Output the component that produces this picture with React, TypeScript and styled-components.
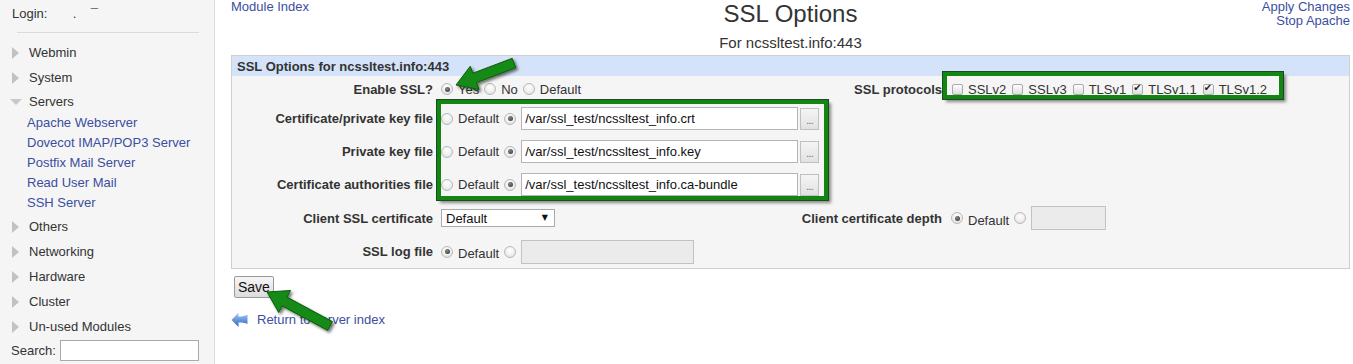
import React from "react";
import styled, { createGlobalStyle } from "styled-components";

const GlobalStyle = createGlobalStyle`
  html, body { margin: 0; padding: 0; background: #fff; }
  body { font-family: "Liberation Sans", Arial, sans-serif; font-size: 13px; color: #333; }
  * { box-sizing: border-box; }
`;

const LINK = "#3b4e9f";

const Page = styled.div`
  position: relative;
  display: flex;
  width: 1353px;
  height: 364px;
  overflow: hidden;
`;

/* ---------- Sidebar ---------- */
const Sidebar = styled.aside`
  width: 215px;
  flex: none;
  background: #f5f5f5;
  border-right: 1px solid #dcdcdc;
`;
const LoginRow = styled.div`
  height: 28px;
  line-height: 28px;
  padding-left: 12px;
  color: #333;
  white-space: pre;
`;
const Separator = styled.div`
  height: 1px;
  margin: 4px 15px 0 17px;
  background: #dadada;
`;
const Nav = styled.nav`
  padding-top: 7px;
`;
const Category = styled.div<{ $open?: boolean }>`
  height: ${(p) => (p.$open ? 23 : 25)}px;
  display: flex;
  align-items: center;
  padding-left: ${(p) => (p.$open ? 10 : 12)}px;
  color: #333;
`;
const TriRight = styled.span`
  width: 0;
  height: 0;
  border-top: 6px solid transparent;
  border-bottom: 6px solid transparent;
  border-left: 7px solid #c2c2c2;
  margin-right: 10px;
`;
const TriDown = styled.span`
  width: 0;
  height: 0;
  border-left: 6px solid transparent;
  border-right: 6px solid transparent;
  border-top: 6px solid #c8c8c8;
  margin-right: 7px;
  margin-top: 1px;
`;
const SubList = styled.div`
  margin-bottom: 1px;
`;
const SubLink = styled.a`
  display: block;
  height: 20px;
  line-height: 20px;
  padding-left: 27px;
  color: ${LINK};
  text-decoration: none;
`;
const SearchRow = styled.div`
  height: 22px;
  display: flex;
  align-items: center;
  padding-left: 11px;
  color: #333;
`;
const SearchInput = styled.input`
  margin-left: 4px;
  width: 139px;
  height: 21px;
  border: 1px solid #a9a9a9;
  background: #fff;
`;

/* ---------- Main ---------- */
const Main = styled.main`
  flex: 1;
  padding: 0 3px 0 16px;
`;
const TopBar = styled.header`
  display: grid;
  grid-template-columns: 1fr auto 1fr;
  align-items: start;
`;
const TopLinks = styled.div<{ $right?: boolean }>`
  display: flex;
  flex-direction: column;
  align-items: ${(p) => (p.$right ? "flex-end" : "flex-start")};
  line-height: 14px;
`;
const TopLink = styled.a`
  color: ${LINK};
  text-decoration: none;
`;
const TitleBlock = styled.div`
  text-align: center;
`;
const Title = styled.h1`
  margin: 0;
  font-size: 24px;
  line-height: 28px;
  font-weight: normal;
  color: #333;
`;
const Subtitle = styled.div`
  margin-top: 6px;
  font-size: 15px;
  line-height: 18px;
  color: #333;
`;

const FormBox = styled.section`
  margin-top: 3px;
  border: 1px solid #cfcfcf;
`;
const FormGrid = styled.div`
  position: relative;
  display: grid;
  grid-template-columns: 204px 362px 147px 1fr;
  grid-template-rows: 20px 26px 33px 33px 33px 34px 33px;
  background: #f5f5f5;
`;
const FormHeader = styled.div`
  grid-column: 1 / -1;
  background: #d5e3fa;
  display: flex;
  align-items: center;
  padding-left: 5px;
  font-weight: bold;
  color: #333;
`;
const Label = styled.div`
  display: flex;
  align-items: center;
  justify-content: flex-end;
  padding-right: 3px;
  font-weight: bold;
  color: #333;
  white-space: nowrap;
`;
const Value = styled.div<{ $span?: boolean; $pad?: number }>`
  display: flex;
  align-items: center;
  padding-left: ${(p) => p.$pad ?? 5}px;
  white-space: nowrap;
  ${(p) => (p.$span ? "grid-column: 2 / 5;" : "")}
`;
const Radio = styled.input.attrs({ type: "radio" })`
  appearance: none;
  width: 12px;
  height: 12px;
  margin: 0 5px 0 0;
  border-radius: 50%;
  border: 1px solid #b9b9b9;
  background: radial-gradient(circle at 50% 35%, #ffffff 0%, #f0f0f0 50%, #d9d9d9 100%);
  position: relative;
  flex: none;
  &:checked::after {
    content: "";
    position: absolute;
    left: 2.5px;
    top: 2.5px;
    width: 5px;
    height: 5px;
    border-radius: 50%;
    background: radial-gradient(circle at 40% 35%, #888 0%, #3d3d3d 80%);
  }
`;
const Check = styled.input.attrs({ type: "checkbox" })`
  appearance: none;
  width: 11px;
  height: 11px;
  margin: 0 5px 0 0;
  border-radius: 2px;
  border: 1px solid #aaa;
  background: linear-gradient(#fdfdfd, #dedede);
  position: relative;
  flex: none;
  &:checked::after {
    content: "✔";
    position: absolute;
    left: 0px;
    top: -3px;
    font-family: "DejaVu Sans", sans-serif;
    font-size: 10px;
    color: #222;
  }
`;
const OptText = styled.span<{ $low?: boolean; $gap?: number }>`
  margin-right: ${(p) => p.$gap ?? 5}px;
  color: #333;
  ${(p) => (p.$low ? "position: relative; top: 2px;" : "")}
`;
const TextField = styled.input<{ $w: number; $h?: number }>`
  width: ${(p) => p.$w}px;
  height: ${(p) => p.$h ?? 23}px;
  border: 1px solid #b5b5b5;
  padding: 0 3px;
  font-family: "Liberation Sans", Arial, sans-serif;
  font-size: 13px;
  color: #111;
  background: #fff;
  &:disabled {
    background: #ebebeb;
    border-color: #c2c2c2;
  }
`;
const DotsButton = styled.button`
  margin-left: 2px;
  width: 19px;
  height: 22px;
  padding: 0;
  border: 1px solid #c0c0c0;
  background: linear-gradient(#f4f4f4, #e2e2e2);
  color: #666;
  font-size: 10px;
  line-height: 24px;
  letter-spacing: -0.5px;
  font-family: "Liberation Sans", Arial, sans-serif;
`;
const SelectWrap = styled.div`
  position: relative;
  width: 114px;
  height: 18px;
  border: 1px solid #a9a9a9;
  background: #fff;
  &::after {
    content: "▼";
    position: absolute;
    right: 6px;
    top: 3px;
    font-size: 8px;
    color: #111;
    font-family: "DejaVu Sans", sans-serif;
    pointer-events: none;
  }
`;
const Select = styled.select`
  appearance: none;
  width: 100%;
  height: 100%;
  border: none;
  background: transparent;
  padding: 0 0 0 4px;
  font-family: "Liberation Sans", Arial, sans-serif;
  font-size: 13px;
  color: #111;
`;
const Highlight = styled.div`
  position: absolute;
  border: 4px solid #138513;
  box-shadow: 0 0 0 1px #1d4a1d, 3px 3px 3px rgba(0, 0, 0, 0.45);
  pointer-events: none;
`;

const Actions = styled.div`
  padding: 7px 0 0 3px;
`;
const SaveButton = styled.button`
  height: 22px;
  padding: 0 3px;
  border: 1px solid #9a9a9a;
  border-radius: 2px;
  background: linear-gradient(#f6f6f6, #dcdcdc);
  font-family: "Liberation Sans", Arial, sans-serif;
  font-size: 14px;
  color: #111;
`;
const ReturnRow = styled.div`
  margin-top: 11px;
  height: 20px;
  display: flex;
  align-items: center;
`;
const ReturnLink = styled.a`
  margin-left: 9px;
  color: ${LINK};
  text-decoration: none;
`;
const Overlay = styled.svg`
  position: absolute;
  left: 0;
  top: 0;
  pointer-events: none;
`;

function arrowPoints(tx: number, ty: number, px: number, py: number): string {
  const dx = px - tx;
  const dy = py - ty;
  const len = Math.hypot(dx, dy);
  const ux = dx / len;
  const uy = dy / len;
  const nx = -uy;
  const ny = ux;
  const head = 20;
  const hh = 12.5;
  const sh = 5;
  const bx = px - ux * head;
  const by = py - uy * head;
  const pts = [
    [px, py],
    [bx + nx * hh, by + ny * hh],
    [bx + nx * sh, by + ny * sh],
    [tx + nx * sh, ty + ny * sh],
    [tx - nx * sh, ty - ny * sh],
    [bx - nx * sh, by - ny * sh],
    [bx - nx * hh, by - ny * hh],
  ];
  return pts.map((p) => `${p[0].toFixed(1)},${p[1].toFixed(1)}`).join(" ");
}

const categoriesTop = ["Webmin", "System"];
const categoriesBottom = ["Others", "Networking", "Hardware", "Cluster", "Un-used Modules"];
const serverLinks = [
  "Apache Webserver",
  "Dovecot IMAP/POP3 Server",
  "Postfix Mail Server",
  "Read User Mail",
  "SSH Server",
];
const protocols = [
  { name: "SSLv2", on: false },
  { name: "SSLv3", on: false },
  { name: "TLSv1", on: false },
  { name: "TLSv1.1", on: true },
  { name: "TLSv1.2", on: true },
];
const fileRows = [
  { label: "Certificate/private key file", path: "/var/ssl_test/ncssltest_info.crt" },
  { label: "Private key file", path: "/var/ssl_test/ncssltest_info.key" },
  { label: "Certificate authorities file", path: "/var/ssl_test/ncssltest_info.ca-bundle" },
];

export default function App() {
  return (
    <Page>
      <GlobalStyle />
      <Sidebar>
        <LoginRow>{"Login:       .    ¯"}</LoginRow>
        <Separator />
        <Nav>
          {categoriesTop.map((c) => (
            <Category key={c}>
              <TriRight />
              {c}
            </Category>
          ))}
          <Category $open>
            <TriDown />
            Servers
          </Category>
          <SubList>
            {serverLinks.map((l) => (
              <SubLink key={l} href="#">
                {l}
              </SubLink>
            ))}
          </SubList>
          {categoriesBottom.map((c) => (
            <Category key={c}>
              <TriRight />
              {c}
            </Category>
          ))}
          <SearchRow>
            Search:
            <SearchInput />
          </SearchRow>
        </Nav>
      </Sidebar>

      <Main>
        <TopBar>
          <TopLinks>
            <TopLink href="#">Module Index</TopLink>
          </TopLinks>
          <TitleBlock>
            <Title>SSL Options</Title>
            <Subtitle>For ncssltest.info:443</Subtitle>
          </TitleBlock>
          <TopLinks $right>
            <TopLink href="#">Apply Changes</TopLink>
            <TopLink href="#">Stop Apache</TopLink>
          </TopLinks>
        </TopBar>

        <FormBox>
          <FormGrid>
            <FormHeader>SSL Options for ncssltest.info:443</FormHeader>

            <Label>Enable SSL?</Label>
            <Value>
              <Radio name="ssl" defaultChecked />
              <OptText>Yes</OptText>
              <Radio name="ssl" />
              <OptText>No</OptText>
              <Radio name="ssl" />
              <OptText>Default</OptText>
            </Value>
            <Label>SSL protocols</Label>
            <Value $pad={7}>
              {protocols.map((p) => (
                <React.Fragment key={p.name}>
                  <Check defaultChecked={p.on} />
                  <OptText $gap={6}>{p.name}</OptText>
                </React.Fragment>
              ))}
            </Value>

            {fileRows.map((r, i) => (
              <React.Fragment key={r.label}>
                <Label>{r.label}</Label>
                <Value $span>
                  <Radio name={`f${i}`} />
                  <OptText>Default</OptText>
                  <Radio name={`f${i}`} defaultChecked />
                  <TextField $w={277} defaultValue={r.path} />
                  <DotsButton>...</DotsButton>
                </Value>
              </React.Fragment>
            ))}

            <Label>Client SSL certificate</Label>
            <Value>
              <SelectWrap>
                <Select defaultValue="Default">
                  <option>Default</option>
                </Select>
              </SelectWrap>
            </Value>
            <Label>Client certificate depth</Label>
            <Value $pad={6}>
              <Radio name="depth" defaultChecked />
              <OptText $low>Default</OptText>
              <Radio name="depth" />
              <TextField $w={75} $h={24} disabled />
            </Value>

            <Label>SSL log file</Label>
            <Value $span>
              <Radio name="log" defaultChecked />
              <OptText $low>Default</OptText>
              <Radio name="log" />
              <TextField $w={173} $h={24} disabled />
            </Value>

            <Highlight style={{ left: 205, top: 44, width: 391, height: 100 }} />
            <Highlight style={{ left: 711, top: 16, width: 340, height: 27 }} />
          </FormGrid>
        </FormBox>

        <Actions>
          <SaveButton>Save</SaveButton>
        </Actions>
        <ReturnRow>
          <svg width="17" height="17" viewBox="0 0 17 17">
            <defs>
              <linearGradient id="ret" x1="0" y1="0" x2="0" y2="1">
                <stop offset="0" stopColor="#b4cff3" />
                <stop offset="0.45" stopColor="#6f9ddf" />
                <stop offset="1" stopColor="#3264ba" />
              </linearGradient>
            </defs>
            <path
              d="M0.5 9 L7.5 1.5 L7.5 5.5 C11 5.5 14 5 16.5 3.5 L16.5 13 C14 11.5 11 11.5 7.5 11.5 L7.5 16 Z"
              fill="url(#ret)"
            />
          </svg>
          <ReturnLink href="#">Return to server index</ReturnLink>
        </ReturnRow>
      </Main>

      <Overlay width="1353" height="364" viewBox="0 0 1353 364">
        <defs>
          <filter id="arrowShadow" x="-20%" y="-20%" width="140%" height="140%">
            <feDropShadow dx="2" dy="2" stdDeviation="1.5" floodColor="#000" floodOpacity="0.55" />
          </filter>
        </defs>
        <polygon
          points={arrowPoints(514, 63, 456, 85)}
          fill="#138a13"
          stroke="#0d5c0d"
          strokeWidth="1"
          strokeLinejoin="round"
          filter="url(#arrowShadow)"
        />
        <polygon
          points={arrowPoints(330, 326, 267, 292)}
          fill="#138a13"
          stroke="#0d5c0d"
          strokeWidth="1"
          strokeLinejoin="round"
          filter="url(#arrowShadow)"
        />
      </Overlay>
    </Page>
  );
}
